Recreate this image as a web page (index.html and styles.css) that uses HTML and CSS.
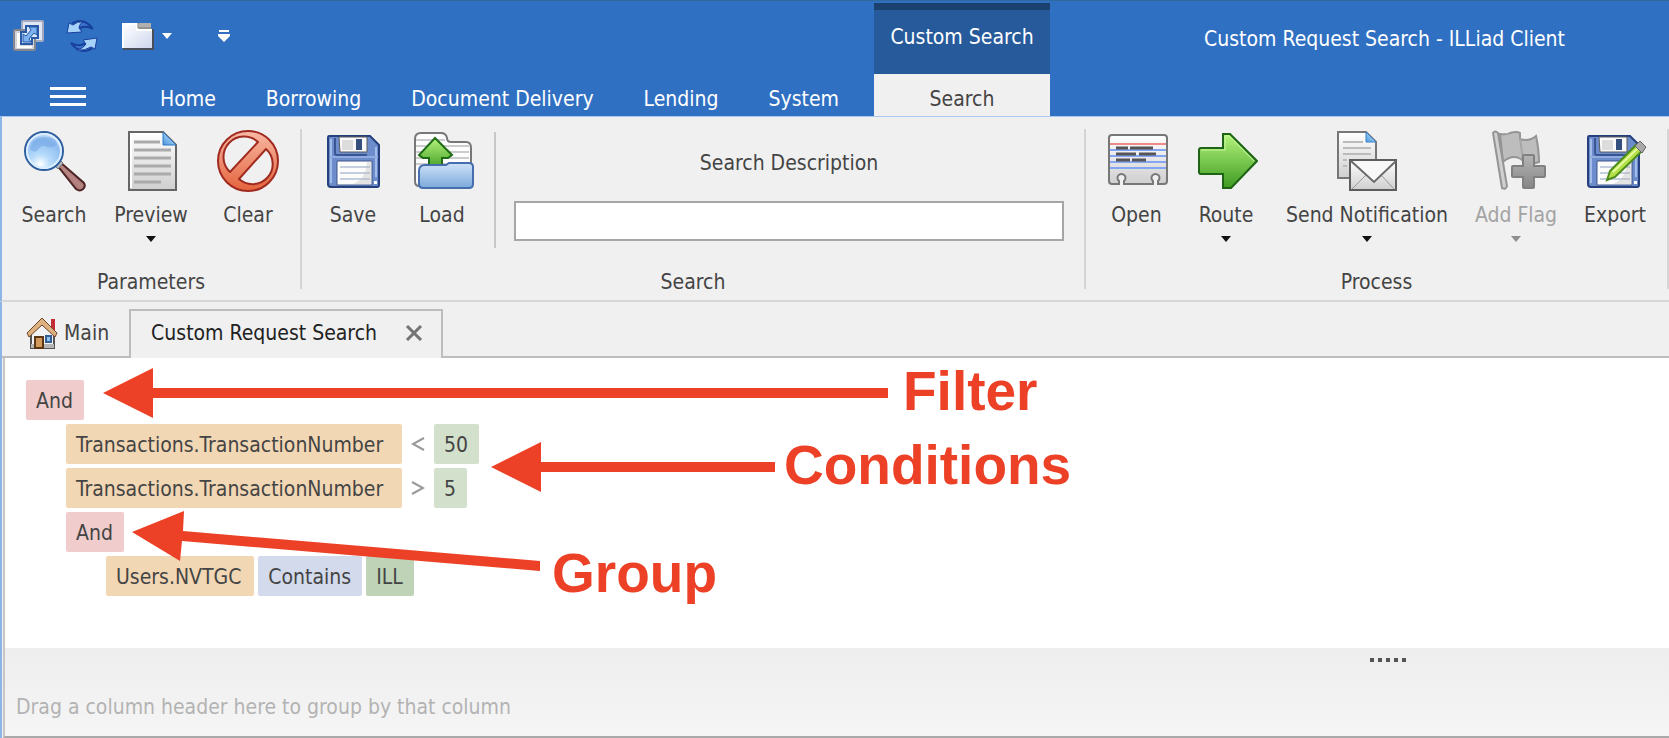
FILE: index.html
```
<!DOCTYPE html>
<html lang="en">

<head>
    <meta charset="UTF-8">
    <title>Custom Request Search - ILLiad Client</title>
    <link rel="stylesheet" href="styles.css">
</head>

<body>
    <!-- shared gradients and symbols -->
    <svg class="defs" width="0" height="0" aria-hidden="true">
        <defs>
            <linearGradient id="gGreen" x1="0" y1="0" x2="0" y2="1">
                <stop offset="0" stop-color="#b4f47c"/><stop offset="1" stop-color="#3f9a22"/>
            </linearGradient>
            <linearGradient id="gGray" x1="0" y1="0" x2="0" y2="1">
                <stop offset="0" stop-color="#fff"/><stop offset="1" stop-color="#cfcfcf"/>
            </linearGradient>
            <linearGradient id="gFolder" x1="0" y1="0" x2="1" y2="1">
                <stop offset="0" stop-color="#fff"/><stop offset="1" stop-color="#cdd6ee"/>
            </linearGradient>
            <linearGradient id="gDark" x1="0" y1="0" x2="0" y2="1">
                <stop offset="0" stop-color="#b5b5b5"/><stop offset="1" stop-color="#868686"/>
            </linearGradient>
            <linearGradient id="gRed" x1="0" y1="0" x2="0" y2="1">
                <stop offset="0" stop-color="#f9b9a4"/><stop offset="1" stop-color="#e4633c"/>
            </linearGradient>
            <linearGradient id="gBlue" x1="0" y1="0" x2="0" y2="1">
                <stop offset="0" stop-color="#cfe2f8"/><stop offset="1" stop-color="#7ba9da"/>
            </linearGradient>
            <linearGradient id="gWood" x1="0" y1="1" x2="1" y2="0">
                <stop offset="0" stop-color="#6b3c3c"/><stop offset=".5" stop-color="#b98585"/><stop offset="1" stop-color="#6b3c3c"/>
            </linearGradient>
            <radialGradient id="gLens" cx=".4" cy=".85" r=".9">
                <stop offset="0" stop-color="#fff"/><stop offset=".3" stop-color="#b5dbfb"/><stop offset=".7" stop-color="#8fbdf0"/><stop offset="1" stop-color="#dcecfc"/>
            </radialGradient>
            <linearGradient id="gFold" x1="0" y1="1" x2="1" y2="0">
                <stop offset="0" stop-color="#4a98e0"/><stop offset="1" stop-color="#d5ebfc"/>
            </linearGradient>
        </defs>
        <symbol id="floppy" viewBox="0 0 60 60">
            <path d="M6 5h41l9 9v40q0 2-2 2H8q-3 0-3-3V7q0-2 1-2z" fill="#6c8ccb" stroke="#25407c" stroke-width="2"/>
            <path d="M8 8v44M53 16v30" stroke="#a3bbe8" stroke-width="2"/>
            <path d="M12 7v15q0 2 2 2h30" fill="none" stroke="#3a5594" stroke-width="2"/>
            <path d="M16 6h28v15H17z" fill="#fafafa" stroke="#5b5b5b" stroke-width="1"/>
            <path d="M19 9h11v10H19z" fill="#dcdcdc"/>
            <rect x="33" y="8" width="6" height="11" fill="#35507f"/>
            <path d="M7 26h48" stroke="#90abe0" stroke-width="2"/>
            <path d="M14 54V30h35v24z" fill="#fcfcfc" stroke="#40558a" stroke-width="1"/>
            <path d="M17 36h30M17 42h30M17 48h30" stroke="#c5cede" stroke-width="2"/>
            <path d="M44 31h4v22H30q13-5 14-22z" fill="#b8b8b8" opacity=".35"/>
            <rect x="51" y="50" width="3" height="3" fill="#fff"/>
        </symbol>
    </svg>

    <header class="titlebar">
        <div class="left">
            <div class="quick">
                <button type="button" aria-label="Switch window">
                    <svg width="32" height="32" viewBox="0 0 32 32">
                        <rect x="10" y="1" width="21" height="20" rx="1" fill="#e2e5f4" stroke="#a3abc0" stroke-width="2"/>
                        <rect x="2" y="10" width="21" height="20" rx="1" fill="#d4d5da" stroke="#83878f" stroke-width="2"/>
                        <path d="M5 13h3v13h12v2H5z" fill="#fff"/>
                        <path d="M14 6h12v12h-6v6H9V12h5z" fill="#dbe8fa" stroke="#2a5ba8" stroke-width="2"/>
                        <path d="M17 7h8v8l-3-2-5 6 2 3h-8v-8l3 2 5-6z" fill="#7db2ee" stroke="#2458a8" stroke-width="1"/>
                    </svg>
                </button>
                <button type="button" aria-label="Refresh">
                    <svg width="32" height="34" viewBox="0 0 32 34">
                        <path d="M7 4q11-6 20 6-7-4-13-1z" fill="#3c74cc" stroke="#173f9c" stroke-width="2"/>
                        <path d="M1 14L3 4l4 2q4-4 10-3-4 2-4 6l3 4z" fill="#a6d2fa" stroke="#173f9c" stroke-width="1"/>
                        <path d="M25 30q-11 6-20-6 7 4 13 1z" fill="#3c74cc" stroke="#173f9c" stroke-width="2"/>
                        <path d="M31 19l-2 11-4-2q-6 4-14 3 7-2 9-6l-3-4z" fill="#a6d2fa" stroke="#173f9c" stroke-width="1"/>
                    </svg>
                </button>
                <button type="button" class="layout" aria-label="Layout">
                    <svg width="32" height="28" viewBox="0 0 32 28">
                        <path d="M1 2h28v5h2v19H1z" fill="url(#gFolder)"/>
                        <path d="M16 1h13v6H17z" fill="#b2b0ae"/>
                        <path d="M1 26V2h14v6h15" fill="none" stroke="#fff" stroke-width="2"/>
                        <path d="M16 1v5h13" fill="none" stroke="#777" stroke-width="1"/>
                        <path d="M1 27h30V7" fill="none" stroke="#4a4e58" stroke-width="2"/>
                    </svg>
                    <svg width="10" height="6" viewBox="0 0 10 6"><path d="M0 0h10L5 6z" fill="#fff"/></svg>
                </button>
                <button type="button" class="more" aria-label="Customize toolbar">
                    <svg width="12" height="12" viewBox="0 0 12 12"><path d="M1 0h10v2H1zM0 4h12v2L6 12 0 6z" fill="#fff"/></svg>
                </button>
            </div>
            <nav class="menu">
                <button type="button" class="burger" aria-label="Menu"><i></i><i></i><i></i></button>
                <a href="#">Home</a>
                <a href="#">Borrowing</a>
                <a href="#">Document Delivery</a>
                <a href="#">Lending</a>
                <a href="#">System</a>
            </nav>
        </div>
        <div class="context">
            <div class="context-name">Custom Search</div>
            <a class="context-tab" href="#">Search</a>
        </div>
        <div class="title">Custom Request Search - ILLiad Client</div>
    </header>

    <section class="ribbon">
        <div class="group">
            <div class="tools parameters">
                <button type="button" class="tool">
                    <svg width="64" height="64" viewBox="0 0 64 64">
                        <path d="M35 36l3-3 24 21q2 3-1 6t-7 0z" fill="url(#gWood)" stroke="#4d2424" stroke-width="2"/>
                        <path d="M31 35l5-6 5 5-5 6z" fill="#b9b9b9" stroke="#777"/>
                        <circle cx="22" cy="22" r="19" fill="url(#gLens)" stroke="#2f5f9f" stroke-width="2"/>
                        <circle cx="22" cy="22" r="17" fill="none" stroke="#dcedff" stroke-width="2"/>
                        <path d="M8 20q4-13 17-12 10 1 10 8-6 4-12 1-4-1-7 4-4 4-8-1z" fill="#6fa4e4" opacity=".5"/>
                    </svg>
                    <span>Search</span>
                </button>
                <button type="button" class="tool">
                    <svg width="64" height="64" viewBox="-1 0 64 64">
                        <path d="M9 3h34l13 13v45H9z" fill="url(#gGray)" stroke="#666" stroke-width="2"/>
                        <path d="M11 5h31M11 5v54" stroke="#fff" stroke-width="2"/>
                        <path d="M14 13h26M14 21h37M14 29h37M14 37h37M14 45h37M14 53h27" stroke="#aaa" stroke-width="3"/>
                        <path d="M43 3v13h13z" fill="url(#gFold)" stroke="#2f78c4" stroke-width="1"/>
                    </svg>
                    <span>Preview</span>
                    <i class="caret"></i>
                </button>
                <button type="button" class="tool">
                    <svg width="64" height="64" viewBox="0 0 64 64">
                        <path fill-rule="evenodd" d="M32 2a30 30 0 1 0 0 60 30 30 0 0 0 0-60zM42 13L14 43A20 20 0 0 1 42 13zM50 20A20 20 0 0 1 23 50z" fill="url(#gRed)" stroke="#a02a20" stroke-width="2" stroke-linejoin="round"/>
                    </svg>
                    <span>Clear</span>
                </button>
            </div>
            <div class="caption">Parameters</div>
        </div>

        <div class="group wide">
            <div class="tools">
                <button type="button" class="tool">
                    <svg width="60" height="64" viewBox="0 -2 60 64"><use href="#floppy" width="60" height="60"/></svg>
                    <span>Save</span>
                </button>
                <button type="button" class="tool">
                    <svg width="64" height="64" viewBox="-1 0 64 64">
                        <path d="M4 10q0-6 6-6h20q5 0 6 5 0 4 4 4h15q5 0 5 6v38H8q-4 0-4-5z" fill="#fdfdfd" stroke="#777" stroke-width="2"/>
                        <path d="M5 11h29M5 17h53M5 23h53M5 29h53M5 35h53" stroke="#ccc" stroke-width="2"/>
                        <path d="M24 9l17 17-4 3h-6v12H18V29h-6l-4-3z" fill="url(#gGreen)" stroke="#1e6d15" stroke-width="2"/>
                        <path d="M14 36h21l3-2h20q4 0 4 4v17q0 4-4 4H12q-4 0-4-4V42q0-6 6-6z" fill="url(#gBlue)" stroke="#466eae" stroke-width="2"/>
                    </svg>
                    <span>Load</span>
                </button>
                <div class="description">
                    <label for="description">Search Description</label>
                    <input type="text" id="description">
                </div>
            </div>
            <div class="caption">Search</div>
        </div>

        <div class="group">
            <div class="tools process">
                <button type="button" class="tool">
                    <svg width="64" height="64" viewBox="-1 0 64 64">
                        <path d="M6 6h52q3 0 3 3v43q0 3-3 3h-6v-3a4 4 0 1 0-5 0v3H18v-3a4 4 0 1 0-5 0v3H6q-3 0-3-3V9q0-3 3-3z" fill="url(#gGray)" stroke="#777" stroke-width="2"/>
                        <path d="M4 15h56" stroke="#ee8a8a" stroke-width="2"/>
                        <path d="M4 21h56M4 27h56M4 33h56M4 39h56" stroke="#84a4f4" stroke-width="2"/>
                        <path d="M10 19h12M24 19h23M10 25h20M33 25h17M10 31h14M26 31h14" stroke="#555" stroke-width="3"/>
                    </svg>
                    <span>Open</span>
                </button>
                <button type="button" class="tool">
                    <svg width="64" height="64" viewBox="-1 0 64 64">
                        <path d="M6 19h22V5h7l27 27-26 27h-8V45H6q-2 0-2-2V21q0-2 2-2z" fill="url(#gGreen)" stroke="#1d6415" stroke-width="2"/>
                        <path d="M6 21h24V7h4l25 25" fill="none" stroke="#c5f79f" stroke-width="1"/>
                    </svg>
                    <span>Route</span>
                    <i class="caret"></i>
                </button>
                <button type="button" class="tool">
                    <svg width="64" height="64" viewBox="0 0 64 64">
                        <path d="M3 3h28l10 10v36H3z" fill="url(#gGray)" stroke="#777" stroke-width="2"/>
                        <path d="M8 13h20M8 19h28M8 25h28M8 31h4M8 37h4" stroke="#bbb" stroke-width="2"/>
                        <path d="M31 3v10h10z" fill="url(#gFold)" stroke="#3a83cc" stroke-width="1"/>
                        <path d="M15 31h46v30H15z" fill="url(#gGray)" stroke="#5d5d5d" stroke-width="2"/>
                        <path d="M17 60l14-14M59 60L46 46" stroke="#999" stroke-width="1"/>
                        <path d="M16 32l23 21 22-21" fill="#f8f8f8" stroke="#6b6b6b" stroke-width="2"/>
                    </svg>
                    <span>Send Notification</span>
                    <i class="caret"></i>
                </button>
                <button type="button" class="tool" disabled>
                    <svg width="64" height="64" viewBox="-6 0 64 64">
                        <path d="M10 5q7 1 10-1 7-2 10 0v6q9 3 16-3 3 14 3 26-9 3-15 0l-3-3q-9-5-18 3z" fill="#bdbdbd" stroke="#949494" stroke-width="2"/>
                        <path d="M30 9l3 22" stroke="#a6a6a6" stroke-width="2"/>
                        <path d="M3 4q2-3 5 0l9 53q-1 4-5 2z" fill="#d0d0d0" stroke="#949494" stroke-width="2"/>
                        <path d="M34 26h9q1 0 1 1v10h10q1 0 1 1v9q0 1-1 1H44v10q0 1-1 1h-9q-1 0-1-1V48H23q-1 0-1-1v-9q0-1 1-1h10V27q0-1 1-1z" fill="url(#gDark)" stroke="#808080" stroke-width="2"/>
                    </svg>
                    <span>Add Flag</span>
                    <i class="caret"></i>
                </button>
                <button type="button" class="tool">
                    <svg width="64" height="64" viewBox="0 0 64 64">
                        <use href="#floppy" y="2" width="60" height="60"/>
                        <path d="M24 51l3-9 26-26 6 6-27 26z" fill="#b4e04a" stroke="#4c8b1d" stroke-width="2"/>
                        <path d="M30 43l26-25" stroke="#e6fa9e" stroke-width="2"/>
                        <path d="M52 17l5-5 6 6-4 6z" fill="#a9a9a9" stroke="#666"/>
                    </svg>
                    <span>Export</span>
                </button>
            </div>
            <div class="caption">Process</div>
        </div>
    </section>

    <nav class="tabs">
        <a class="tab" href="#">
            <svg width="32" height="34" viewBox="0 0 32 34">
                <path d="M25 3h4v11h-4z" fill="#c22a35"/>
                <path d="M5 17L16 7l12 10v15H5z" fill="#f2f3f4" stroke="#555" stroke-width="2"/>
                <path d="M5 28h23v4H5z" fill="#b5b5b5"/>
                <rect x="9" y="21" width="8" height="11" fill="#d19a5c" stroke="#5b3715" stroke-width="2"/>
                <rect x="20" y="20" width="5" height="6" fill="#8cc4f4" stroke="#355f92" stroke-width="2"/>
                <path d="M1 17L16 2l15 15-2 4L16 9 3 21z" fill="#deb183" stroke="#6f4421" stroke-width="1"/>
            </svg>
            <span>Main</span>
        </a>
        <div class="tab active">
            <span>Custom Request Search</span>
            <button type="button" aria-label="Close tab">
                <svg width="18" height="16" viewBox="0 0 18 16"><path d="M2 1l14 14M16 1L2 15" stroke="#747474" stroke-width="3"/></svg>
            </button>
        </div>
        <div class="rest"></div>
    </nav>

    <main class="panel">
        <div class="filter">
            <div class="row"><button type="button" class="chip and">And</button></div>
            <div class="row level1">
                <button type="button" class="chip field">Transactions.TransactionNumber</button>
                <button type="button" class="sign" aria-label="less than"><svg width="14" height="20" viewBox="0 0 14 20"><path d="M13 4L2 10l11 6" fill="none" stroke="#999" stroke-width="2"/></svg></button>
                <button type="button" class="chip value">50</button>
            </div>
            <div class="row level1">
                <button type="button" class="chip field">Transactions.TransactionNumber</button>
                <button type="button" class="sign" aria-label="greater than"><svg width="14" height="20" viewBox="0 0 14 20"><path d="M1 4l11 6-11 6" fill="none" stroke="#999" stroke-width="2"/></svg></button>
                <button type="button" class="chip value">5</button>
            </div>
            <div class="row level1"><button type="button" class="chip and">And</button></div>
            <div class="row level2">
                <button type="button" class="chip field">Users.NVTGC</button>
                <button type="button" class="chip operator">Contains</button>
                <button type="button" class="chip value selected">ILL</button>
            </div>

            <!-- callouts -->
            <svg class="notes" width="1100" height="260" viewBox="0 0 1100 260">
                <path d="M98 35l50-25v20h735v10H148v20z"/>
                <path d="M486 109l50-25v20h234v10H536v20z"/>
                <path d="M127 174l52-21-1 20 357 30v10l-358-30-2 20z"/>
                <text x="898" y="52">Filter</text>
                <text x="779" y="126">Conditions</text>
                <text x="547" y="234">Group</text>
            </svg>
        </div>
        <div class="results">
            <div class="splitter"><i></i><i></i><i></i><i></i><i></i></div>
            <div class="hint">Drag a column header here to group by that column</div>
        </div>
    </main>
</body>

</html>
```

FILE: styles.css
```
*{
    box-sizing: border-box;
}
body{
    margin: 0;
    min-height: 100vh;
    display: flex;
    flex-direction: column;
    background: #f0f0f0;
    color: #444;
    font-family: "DejaVu Sans Condensed", Tahoma, sans-serif;
    font-size: 21px;
    line-height: 26px;
    overflow-x: hidden;
}
button{
    margin: 0;
    padding: 0;
    border: 0;
    background: none;
    color: inherit;
    font: inherit;
    white-space: nowrap;
}
a{
    color: inherit;
    text-decoration: none;
}
svg{
    display: block;
}
.defs{
    position: absolute;
}

/* title bar */
.titlebar{
    display: flex;
    height: 116px;
    border-top: 1px solid #2f6a9c;
    background: #3070c2;
    color: #fff;
}
.left{
    display: flex;
    flex-direction: column;
    justify-content: space-between;
    width: 874px;
    flex: none;
}
.quick{
    display: flex;
    align-items: center;
    gap: 22px;
    height: 70px;
    padding-left: 12px;
}
.quick .layout{
    display: flex;
    align-items: center;
    gap: 8px;
    margin-left: 2px;
}
.quick .more{
    margin-left: 24px;
}
.menu{
    display: flex;
    align-items: center;
    height: 40px;
    padding-left: 50px;
}
.menu a{
    padding: 5px 25px 0;
}
.burger{
    display: grid;
    gap: 5px;
    width: 36px;
    margin-right: 49px;
}
.burger i{
    height: 3px;
    background: #fff;
}
.context{
    display: flex;
    flex-direction: column;
    width: 176px;
    flex: none;
    padding-top: 2px;
    text-align: center;
}
.context-name{
    height: 71px;
    padding-top: 14px;
    border-top: 7px solid #1b426f;
    background: #265a9b;
}
.context-tab{
    flex: 1;
    padding-top: 12px;
    background: #f0f0f0;
    color: #444;
}
.title{
    flex: 1;
    padding: 25px 0 0 50px;
    text-align: center;
    white-space: nowrap;
}

/* ribbon */
.ribbon{
    display: flex;
    padding: 12px 0 11px;
    border-left: 2px solid #8ab5e6;
    border-top: 1px solid #a9c8ec;
    border-bottom: 2px solid #d6d6d6;
    height: 186px;
}
.group{
    display: flex;
    flex-direction: column;
    justify-content: space-between;
    padding: 0 6px;
    border-right: 2px solid #d4d4d4;
}
.group.wide{
    flex: 1;
}
.tools{
    display: grid;
    grid-template-columns: 90px 88px 1fr;
}
.tools.parameters{
    grid-template-columns: 92px 102px 92px;
}
.tools.process{
    grid-template-columns: 89px 90px 192px 106px 92px;
}
.tool{
    display: flex;
    flex-direction: column;
    align-items: center;
    align-self: start;
}
.tool span{
    margin-top: 9px;
}
.tool:disabled{
    color: #a3a3a3;
}
.caret{
    margin-top: 8px;
    border: 5px solid transparent;
    border-top: 6px solid #111;
    border-bottom: 0;
}
.tool:disabled .caret{
    border-top-color: #8f8f8f;
}
.description{
    display: flex;
    flex-direction: column;
    align-items: center;
    justify-content: space-between;
    height: 116px;
    margin: 3px 14px 0 8px;
    padding: 18px 0 7px 18px;
    border-left: 2px solid #c8c8c8;
}
.description input{
    width: 100%;
    height: 40px;
    padding: 0 8px;
    border: 2px solid #a6a6a6;
    background: #fff;
    font: inherit;
}
.caption{
    text-align: center;
    line-height: 14px;
}

/* document tabs */
.tabs{
    display: flex;
    height: 56px;
    padding-top: 7px;
    border-left: 2px solid #8ab5e6;
}
.tab{
    display: flex;
    align-items: center;
    gap: 6px;
    padding: 0 20px 0 24px;
    border-bottom: 2px solid #bdbdbd;
}
.tab.active{
    gap: 28px;
    padding: 0 18px 4px 20px;
    border: 2px solid #bdbdbd;
    border-bottom: 0;
    color: #222;
}
.rest{
    flex: 1;
    border-bottom: 2px solid #bdbdbd;
}

/* filter */
.panel{
    display: flex;
    flex-direction: column;
    flex: 1;
    border-left: 2px solid #8ab5e6;
}
.filter{
    position: relative;
    display: grid;
    gap: 4px;
    margin-left: 1px;
    padding: 22px 0 52px 21px;
    border-left: 2px solid #c6c6c6;
    background: #fff;
}
.row{
    display: flex;
    gap: 4px;
}
.level1{
    margin-left: 40px;
}
.level2{
    margin-left: 80px;
}
.chip{
    height: 40px;
    padding: 1px 11px 0 10px;
    border-radius: 2px;
    text-align: left;
}
.and{
    background: #f0cccc;
}
.field{
    padding-right: 13px;
    background: #f2d7b5;
}
.level1 .field{
    min-width: 336px;
}
.operator{
    background: #d2daeb;
}
.value{
    background: #d2e0cc;
}
.value.selected{
    background: #bfd3b7;
}
.sign{
    width: 24px;
    display: flex;
    align-items: center;
    justify-content: center;
}
.notes{
    position: absolute;
    left: 0;
    top: 0;
    fill: #ec4126;
    font: bold 55px "Liberation Sans", Arial, sans-serif;
    pointer-events: none;
}

/* results */
.results{
    flex: 1;
    margin-left: 1px;
    padding-left: 1px;
    border-left: 2px solid #c6c6c6;
    border-bottom: 2px solid #a9a9a9;
    background: linear-gradient(#eee, #f5f5f5);
}
.splitter{
    display: flex;
    gap: 4px;
    padding: 10px 0 0 82%;
}
.splitter i{
    width: 4px;
    height: 4px;
    background: #555;
}
.hint{
    padding: 32px 10px 15px;
    color: #b3b3b3;
}
```
